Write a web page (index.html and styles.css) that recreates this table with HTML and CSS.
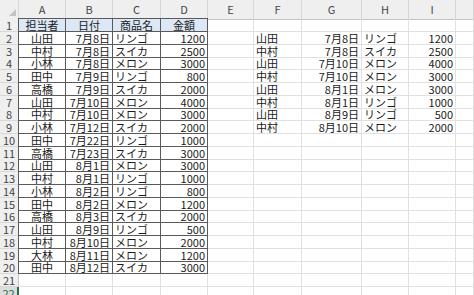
FILE: index.html
```html
<!DOCTYPE html>
<html lang="ja">
<head>
<meta charset="utf-8">
<title>Sheet</title>
<link rel="stylesheet" href="styles.css">
</head>
<body>
<div class="sheet">
  <div class="row colhead">
    <div class="corner"><svg width="19" height="19" viewBox="0 0 19 19"><polygon points="16,9 16,16 9,16" fill="#c3c3c3"/></svg></div>
    <div>A</div><div>B</div><div>C</div><div>D</div><div>E</div><div>F</div><div>G</div><div>H</div><div>I</div><div></div>
  </div>
  <div class="row first"><div class="rh">1</div><div class="c t hd">担当者</div><div class="c t hd">日付</div><div class="c t hd">商品名</div><div class="c t hd">金額</div><div class="c"></div><div class="c"></div><div class="c"></div><div class="c"></div><div class="c"></div><div class="c"></div></div>
  <div class="row"><div class="rh">2</div><div class="c t m">山田</div><div class="c t r">7月8日</div><div class="c t">リンゴ</div><div class="c t r">1200</div><div class="c"></div><div class="c">山田</div><div class="c r">7月8日</div><div class="c">リンゴ</div><div class="c r">1200</div><div class="c"></div></div>
  <div class="row"><div class="rh">3</div><div class="c t m">中村</div><div class="c t r">7月8日</div><div class="c t">スイカ</div><div class="c t r">2500</div><div class="c"></div><div class="c">中村</div><div class="c r">7月8日</div><div class="c">スイカ</div><div class="c r">2500</div><div class="c"></div></div>
  <div class="row"><div class="rh">4</div><div class="c t m">小林</div><div class="c t r">7月8日</div><div class="c t">メロン</div><div class="c t r">3000</div><div class="c"></div><div class="c">山田</div><div class="c r">7月10日</div><div class="c">メロン</div><div class="c r">4000</div><div class="c"></div></div>
  <div class="row"><div class="rh">5</div><div class="c t m">田中</div><div class="c t r">7月9日</div><div class="c t">リンゴ</div><div class="c t r">800</div><div class="c"></div><div class="c">中村</div><div class="c r">7月10日</div><div class="c">メロン</div><div class="c r">3000</div><div class="c"></div></div>
  <div class="row"><div class="rh">6</div><div class="c t m">高橋</div><div class="c t r">7月9日</div><div class="c t">スイカ</div><div class="c t r">2000</div><div class="c"></div><div class="c">山田</div><div class="c r">8月1日</div><div class="c">メロン</div><div class="c r">3000</div><div class="c"></div></div>
  <div class="row"><div class="rh">7</div><div class="c t m">山田</div><div class="c t r">7月10日</div><div class="c t">メロン</div><div class="c t r">4000</div><div class="c"></div><div class="c">中村</div><div class="c r">8月1日</div><div class="c">リンゴ</div><div class="c r">1000</div><div class="c"></div></div>
  <div class="row"><div class="rh">8</div><div class="c t m">中村</div><div class="c t r">7月10日</div><div class="c t">メロン</div><div class="c t r">3000</div><div class="c"></div><div class="c">山田</div><div class="c r">8月9日</div><div class="c">リンゴ</div><div class="c r">500</div><div class="c"></div></div>
  <div class="row"><div class="rh">9</div><div class="c t m">小林</div><div class="c t r">7月12日</div><div class="c t">スイカ</div><div class="c t r">2000</div><div class="c"></div><div class="c">中村</div><div class="c r">8月10日</div><div class="c">メロン</div><div class="c r">2000</div><div class="c"></div></div>
  <div class="row"><div class="rh">10</div><div class="c t m">田中</div><div class="c t r">7月22日</div><div class="c t">リンゴ</div><div class="c t r">1000</div><div class="c"></div><div class="c"></div><div class="c"></div><div class="c"></div><div class="c"></div><div class="c"></div></div>
  <div class="row"><div class="rh">11</div><div class="c t m">高橋</div><div class="c t r">7月23日</div><div class="c t">スイカ</div><div class="c t r">3000</div><div class="c"></div><div class="c"></div><div class="c"></div><div class="c"></div><div class="c"></div><div class="c"></div></div>
  <div class="row"><div class="rh">12</div><div class="c t m">山田</div><div class="c t r">8月1日</div><div class="c t">メロン</div><div class="c t r">3000</div><div class="c"></div><div class="c"></div><div class="c"></div><div class="c"></div><div class="c"></div><div class="c"></div></div>
  <div class="row"><div class="rh">13</div><div class="c t m">中村</div><div class="c t r">8月1日</div><div class="c t">リンゴ</div><div class="c t r">1000</div><div class="c"></div><div class="c"></div><div class="c"></div><div class="c"></div><div class="c"></div><div class="c"></div></div>
  <div class="row"><div class="rh">14</div><div class="c t m">小林</div><div class="c t r">8月2日</div><div class="c t">リンゴ</div><div class="c t r">800</div><div class="c"></div><div class="c"></div><div class="c"></div><div class="c"></div><div class="c"></div><div class="c"></div></div>
  <div class="row"><div class="rh">15</div><div class="c t m">田中</div><div class="c t r">8月2日</div><div class="c t">メロン</div><div class="c t r">1200</div><div class="c"></div><div class="c"></div><div class="c"></div><div class="c"></div><div class="c"></div><div class="c"></div></div>
  <div class="row"><div class="rh">16</div><div class="c t m">高橋</div><div class="c t r">8月3日</div><div class="c t">スイカ</div><div class="c t r">2000</div><div class="c"></div><div class="c"></div><div class="c"></div><div class="c"></div><div class="c"></div><div class="c"></div></div>
  <div class="row"><div class="rh">17</div><div class="c t m">山田</div><div class="c t r">8月9日</div><div class="c t">リンゴ</div><div class="c t r">500</div><div class="c"></div><div class="c"></div><div class="c"></div><div class="c"></div><div class="c"></div><div class="c"></div></div>
  <div class="row"><div class="rh">18</div><div class="c t m">中村</div><div class="c t r">8月10日</div><div class="c t">メロン</div><div class="c t r">2000</div><div class="c"></div><div class="c"></div><div class="c"></div><div class="c"></div><div class="c"></div><div class="c"></div></div>
  <div class="row"><div class="rh">19</div><div class="c t m">大林</div><div class="c t r">8月11日</div><div class="c t">メロン</div><div class="c t r">1200</div><div class="c"></div><div class="c"></div><div class="c"></div><div class="c"></div><div class="c"></div><div class="c"></div></div>
  <div class="row"><div class="rh">20</div><div class="c t m">田中</div><div class="c t r">8月12日</div><div class="c t">スイカ</div><div class="c t r">3000</div><div class="c"></div><div class="c"></div><div class="c"></div><div class="c"></div><div class="c"></div><div class="c"></div></div>
  <div class="row"><div class="rh">21</div><div class="c"></div><div class="c"></div><div class="c"></div><div class="c"></div><div class="c"></div><div class="c"></div><div class="c"></div><div class="c"></div><div class="c"></div><div class="c"></div></div>
  <div class="row"><div class="rh act">22</div><div class="c"></div><div class="c"></div><div class="c"></div><div class="c"></div><div class="c"></div><div class="c"></div><div class="c"></div><div class="c"></div><div class="c"></div><div class="c"></div></div>
</div>
</body>
</html>
```
FILE: styles.css
```css
* { box-sizing: border-box; }
html, body { margin: 0; padding: 0; background: #fff; }
body {
  font-family: "Noto Sans CJK JP", "Noto Sans", sans-serif;
  font-size: 11px;
  color: #1a1a1a;
  overflow: hidden;
}
.sheet { width: 474px; height: 295px; overflow: hidden; }
.row {
  display: grid;
  grid-template-columns: 19px 47px 47px 48px 47px 46px 48px 60px 47px 47px 1fr;
  height: 12.75px;
}
.row > div {
  white-space: nowrap;
  line-height: 12px;
}
.colhead { height: 19px; background: #efefef; }
.colhead > div {
  border-right: 1px solid #d6d6d6;
  border-bottom: 1px solid #c4c4c4;
  text-align: center;
  line-height: 18px;
  color: #444;
}
.colhead .corner { background: #efefef; }
.corner svg { display: block; }
.rh {
  background: #efefef;
  border-right: 1px solid #c4c4c4;
  border-bottom: 1px solid #d8d8d8;
  text-align: center;
  color: #444;
}
.rh.act {
  background: #dcdcdc;
  border-right: 2px solid #217346;
  color: #217346;
}
.c {
  border-right: 1px solid #e1e1e1;
  border-bottom: 1px solid #e1e1e1;
  padding: 0 2px;
}
.c.t { border-right-color: #5a5a5a; border-bottom-color: #5a5a5a; }
.row > .t:nth-child(2) { box-shadow: -1px 0 0 #5a5a5a; }
.first > .t { box-shadow: 0 -1px 0 #5a5a5a; }
.first > .t:nth-child(2) { box-shadow: -1px 0 0 #5a5a5a, 0 -1px 0 #5a5a5a, -1px -1px 0 #5a5a5a; }
.hd { background: #dce8f5; text-align: center; }
.m { text-align: center; }
.r { text-align: right; }
```
